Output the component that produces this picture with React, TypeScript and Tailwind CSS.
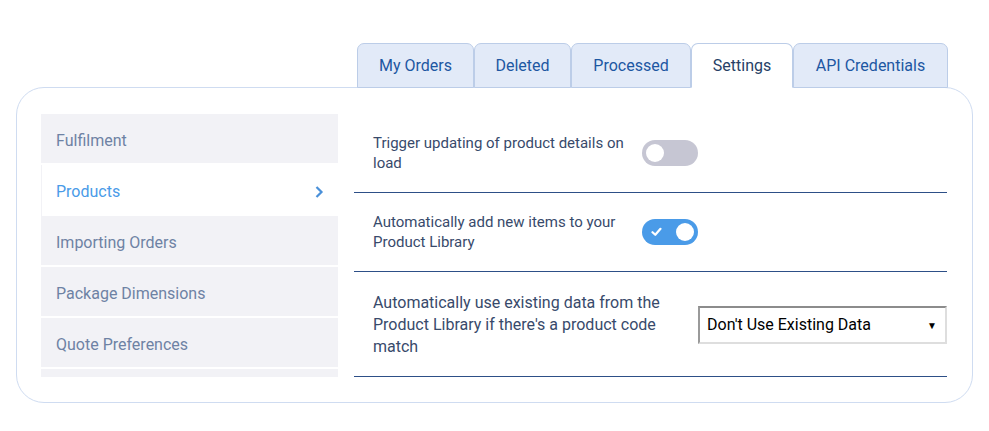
import React, { useState } from "react";

const tabs = [
  { label: "My Orders", w: "w-[117px]" },
  { label: "Deleted", w: "w-[97px]" },
  { label: "Processed", w: "w-[120px]" },
  { label: "Settings", w: "w-[102px]" },
  { label: "API Credentials", w: "w-[155px]" },
];

const menu = ["Fulfilment", "Products", "Importing Orders", "Package Dimensions", "Quote Preferences"];

function Toggle({ on }: { on: boolean }) {
  return (
    <div
      className={
        on
          ? "relative w-[56px] h-[26px] rounded-full bg-[#4a9be8] shrink-0"
          : "relative w-[56px] h-[26px] rounded-full bg-[#c6c6d3] shrink-0"
      }
    >
      {on && (
        <svg className="absolute left-[9px] top-[8px]" width="11" height="10" viewBox="0 0 11 10">
          <path d="M1.5 5.2 L4.3 7.8 L9.5 1.8" fill="none" stroke="white" strokeWidth="2.2" strokeLinecap="round" strokeLinejoin="round" />
        </svg>
      )}
      <div
        className={
          on
            ? "absolute right-[4px] top-[4px] w-[18px] h-[18px] rounded-full bg-white"
            : "absolute left-[4px] top-[4px] w-[18px] h-[18px] rounded-full bg-white"
        }
      />
    </div>
  );
}

export default function App() {
  const [active] = useState("Settings");
  const [section] = useState("Products");

  return (
    <div className="w-[989px] h-[431px] bg-white px-4 pt-[43px] font-['Roboto',sans-serif]">
      <div className="relative z-10 flex pl-[341px] -mb-px">
        {tabs.map((t) => (
          <div
            key={t.label}
            className={
              t.label === active
                ? `${t.w} h-[45px] flex items-center justify-center rounded-t-[7px] border border-[#bccde8] border-b-white bg-white text-[16px] text-[#273f66]`
                : `${t.w} h-[45px] flex items-center justify-center rounded-t-[7px] border border-[#bccde8] bg-[#e2eaf8] text-[16px] text-[#1d57a2]`
            }
          >
            {t.label}
          </div>
        ))}
      </div>

      <div className="border border-[#cfdcf1] rounded-[28px] pt-[26px] pb-[25px] pl-[24px] pr-[25px] flex gap-4">
        <div className="w-[297px] bg-[#f2f2f6] flex flex-col">
          {menu.map((m) => (
            <div
              key={m}
              className={
                m === section
                  ? "h-[51px] ml-px pl-[14px] pr-3 pt-[5px] flex items-center justify-between bg-white border-b-2 border-white text-[16px] text-[#4a9be8]"
                  : "h-[51px] pl-[15px] pr-3 pt-[5px] flex items-center bg-[#f2f2f6] border-b-2 border-white text-[16px] text-[#6e82a4]"
              }
            >
              <span>{m}</span>
              {m === section && (
                <svg width="10" height="14" viewBox="0 0 10 14" className="mr-[2px]">
                  <path d="M2.5 2 L7.5 7 L2.5 12" fill="none" stroke="#4a90d9" strokeWidth="2.2" />
                </svg>
              )}
            </div>
          ))}
        </div>

        <div className="flex-1 flex flex-col">
          <div className="flex items-center py-[19px] pl-[19px] border-b border-[#2d4f87]">
            <p className="w-[269px] text-[15px] leading-[20px] text-[#384a6b]">
              Trigger updating of product details on load
            </p>
            <Toggle on={false} />
          </div>
          <div className="flex items-center py-[19px] pl-[19px] border-b border-[#2d4f87]">
            <p className="w-[269px] text-[15px] leading-[20px] text-[#384a6b]">
              Automatically add new items to your Product Library
            </p>
            <Toggle on={true} />
          </div>
          <div className="flex items-center justify-between pt-[20px] pb-[18px] pl-[19px] border-b border-[#2d4f87]">
            <p className="w-[305px] text-[16px] leading-[22px] text-[#384a6b]">
              Automatically use existing data from the Product Library if there's a product code match
            </p>
            <div className="w-[249px] h-[38px] flex items-center justify-between pl-[7px] pr-[8px] bg-white border-2 border-t-[#8c8c8c] border-l-[#9a9a9a] border-r-[#dedede] border-b-[#dedede] text-[16px] text-black">
              <span>Don't Use Existing Data</span>
              <span className="text-[10px]">▼</span>
            </div>
          </div>
        </div>
      </div>
    </div>
  );
}
